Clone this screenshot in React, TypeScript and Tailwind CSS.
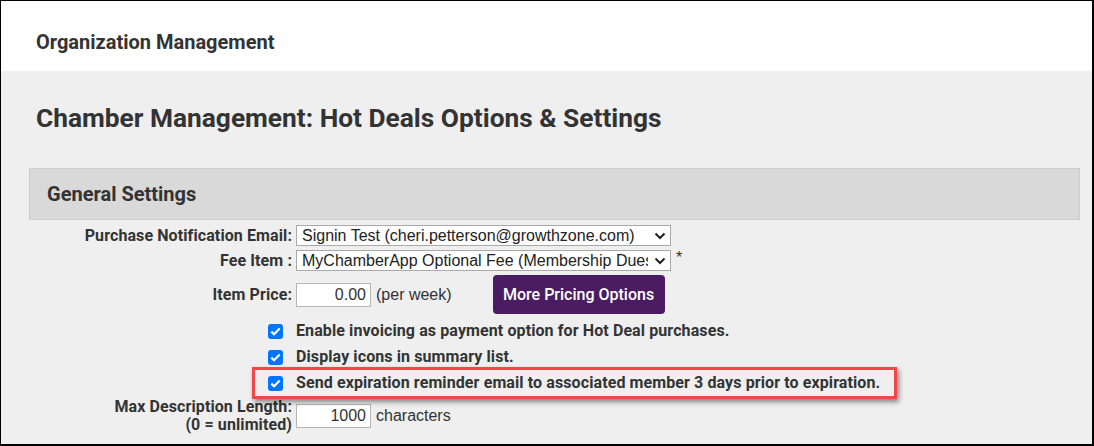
import React from "react";

function Chevron() {
  return (
    <svg width="12" height="8" viewBox="0 0 12 8" className="shrink-0">
      <path d="M1.5 1.5 L6 6 L10.5 1.5" fill="none" stroke="#222" strokeWidth="2" />
    </svg>
  );
}

function Select({ text }: { text: string }) {
  return (
    <div className="w-[375px] h-[21px] bg-white border border-[#a9a9a9] flex items-center pl-[5px] pr-[4px] gap-[6px] font-['Liberation_Sans',Arial,sans-serif] font-normal tracking-normal text-[16px] text-[#222]">
      <span className="flex-1 overflow-hidden whitespace-nowrap leading-[19px]">{text}</span>
      <Chevron />
    </div>
  );
}

function Check() {
  return (
    <div className="w-[15px] h-[15px] rounded-[3px] bg-[#0075ff] flex items-center justify-center shrink-0">
      <svg width="11" height="9" viewBox="0 0 11 9">
        <path d="M1.3 4.6 L4.1 7.3 L9.7 1.5" fill="none" stroke="#fff" strokeWidth="2.2" />
      </svg>
    </div>
  );
}

function NumInput({ value }: { value: string }) {
  return (
    <div className="w-[75px] h-[24px] bg-white border border-[#b5b5b5] flex items-center justify-end pr-[4px] font-['Liberation_Sans',Arial,sans-serif] font-normal tracking-normal text-[16px] text-[#333]">
      {value}
    </div>
  );
}

export default function App() {
  return (
    <div className="w-[1094px] h-[446px] border-t border-l border-r-2 border-b-2 border-black overflow-hidden font-['Roboto',sans-serif] text-[#333] flex flex-col">
      <div className="h-[70px] bg-white pt-[29px] pl-[35px] shrink-0">
        <div className="text-[20px] leading-[24px] font-bold">Organization Management</div>
      </div>
      <div className="flex-1 bg-[#efefef] pl-[28px] pr-[12px]">
        <h1 className="mt-[31px] pl-[7px] text-[26.3px] leading-[32px] font-bold">
          Chamber Management: Hot Deals Options &amp; Settings
        </h1>
        <div className="mt-[34px] h-[52px] bg-[#d9d9d9] border border-[#cccccc] flex items-center pl-[17px]">
          <span className="text-[20px] leading-[24px] font-bold">General Settings</span>
        </div>
        <div className="pt-[5px] flex flex-col text-[16px] font-bold tracking-[0.1px]">
          <div className="flex items-center h-[21px]">
            <div className="w-[263px] text-right leading-[20px]">Purchase Notification Email:</div>
            <div className="ml-[4px]">
              <Select text="Signin Test (cheri.petterson@growthzone.com)" />
            </div>
          </div>
          <div className="flex items-center h-[21px] mt-[4px]">
            <div className="w-[263px] text-right leading-[20px]">Fee Item :</div>
            <div className="ml-[4px]">
              <Select text="MyChamberApp Optional Fee (Membership Dues)" />
            </div>
            <span className="ml-[5px] self-start leading-[16px] font-normal font-['Liberation_Sans',Arial,sans-serif] text-[#333]">*</span>
          </div>
          <div className="flex items-center h-[39px] mt-[4px]">
            <div className="w-[263px] text-right leading-[20px]">Item Price:</div>
            <div className="ml-[4px]">
              <NumInput value="0.00" />
            </div>
            <span className="ml-[5px] font-normal tracking-normal font-['Liberation_Sans',Arial,sans-serif]">(per week)</span>
            <button className="ml-[41px] h-[39px] w-[172px] rounded-[4px] bg-[#4b1c61] text-white font-medium tracking-normal text-[16px] flex items-center justify-center">
              More Pricing Options
            </button>
          </div>
          <div className="flex items-center h-[26px] mt-[4px] pl-[239px]">
            <Check />
            <span className="ml-[13px] leading-[20px]">Enable invoicing as payment option for Hot Deal purchases.</span>
          </div>
          <div className="flex items-center h-[26px] pl-[239px]">
            <Check />
            <span className="ml-[13px] leading-[20px]">Display icons in summary list.</span>
          </div>
          <div className="relative flex items-center h-[26px] pl-[239px]">
            <div className="absolute left-[223px] top-[-3px] w-[645px] h-[32px] border-[3px] border-[#f2464b] shadow-[2px_3px_5px_rgba(0,0,0,0.45)]" />
            <Check />
            <span className="ml-[13px] leading-[20px]">Send expiration reminder email to associated member 3 days prior to expiration.</span>
          </div>
          <div className="flex items-center mt-[2px]">
            <div className="w-[263px] text-right leading-[18px]">
              Max Description Length:
              <br />
              (0 = unlimited)
            </div>
            <div className="ml-[4px]">
              <NumInput value="1000" />
            </div>
            <span className="ml-[5px] font-normal tracking-normal font-['Liberation_Sans',Arial,sans-serif]">characters</span>
          </div>
        </div>
      </div>
    </div>
  );
}
